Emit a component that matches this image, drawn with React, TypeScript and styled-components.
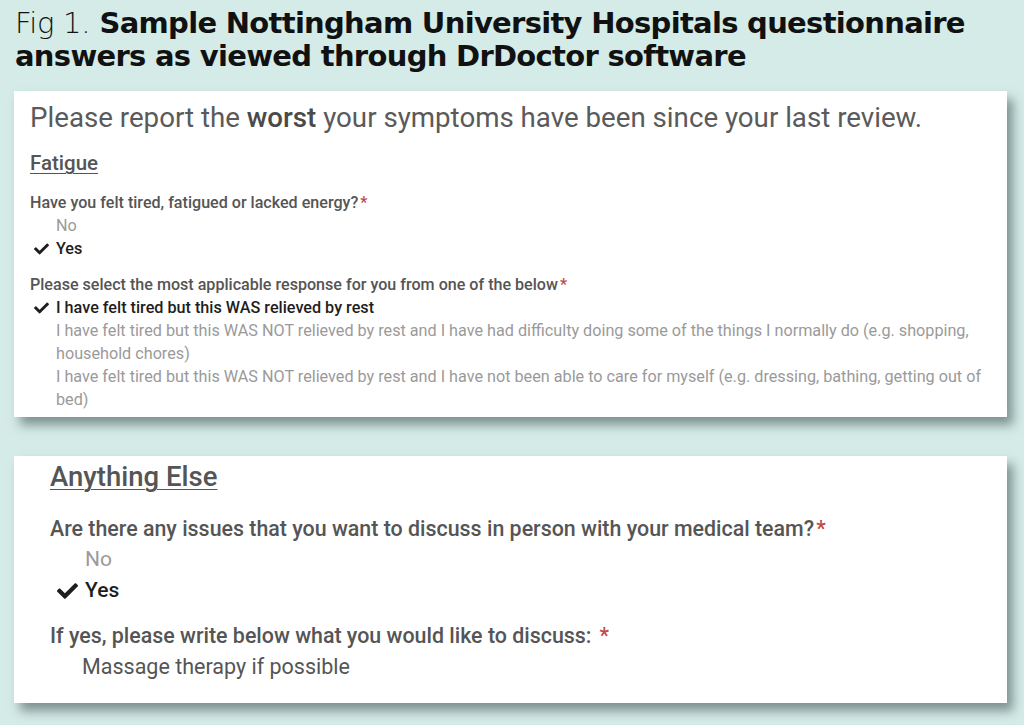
import React from 'react';
import styled, { createGlobalStyle } from 'styled-components';
import { FaCheck } from 'react-icons/fa';

const GlobalStyle = createGlobalStyle`
  html, body {
    margin: 0;
    padding: 0;
    background: #d4ebe7;
  }
  body {
    width: 1024px;
    height: 725px;
    overflow: hidden;
  }
`;

const Page = styled.div`
  width: 1024px;
  height: 725px;
  box-sizing: border-box;
  padding: 7px 17px 0 14px;
  display: flex;
  flex-direction: column;
  font-family: Roboto, 'Liberation Sans', sans-serif;
`;

const Caption = styled.h1`
  margin: 0 0 0 1px;
  font-family: 'DejaVu Sans', 'Noto Sans', sans-serif;
  font-size: 29px;
  line-height: 33px;
  font-weight: 700;
  letter-spacing: -0.7px;
  color: #111;
`;

const CaptionLead = styled.span`
  font-weight: 300;
  letter-spacing: -0.3px;
`;

const Card = styled.section<{ $pad: string; $top: number; $height: number }>`
  margin-top: ${({ $top }) => $top}px;
  height: ${({ $height }) => $height}px;
  box-sizing: border-box;
  background: #fff;
  padding: ${({ $pad }) => $pad};
  box-shadow: 6px 8px 10px rgba(80, 100, 100, 0.65);
  display: flex;
  flex-direction: column;
  color: #555;
`;

const Intro = styled.h2`
  margin: 0;
  font-size: 27.7px;
  line-height: 36px;
  font-weight: 400;
  color: #5a5a5a;

  b {
    font-weight: 500;
    color: #4a4a4a;
  }
`;

const Section = styled.h3<{ $size: number; $line: number; $gap: number }>`
  margin: ${({ $gap }) => $gap}px 0 0;
  font-size: ${({ $size }) => $size}px;
  line-height: ${({ $line }) => $line}px;
  font-weight: 500;
  color: #555;
  text-decoration: underline;
  text-underline-offset: 3px;
  text-decoration-thickness: 1px;
`;

const Question = styled.div<{ $size: number; $line: number; $gap: number }>`
  margin-top: ${({ $gap }) => $gap}px;
  font-size: ${({ $size }) => $size}px;
  line-height: ${({ $line }) => $line}px;
  font-weight: 500;
  color: #555;
`;

const Star = styled.span<{ $space?: boolean }>`
  color: #c0474a;
  margin-left: ${({ $space }) => ($space ? '8px' : '2px')};
`;

const Answers = styled.div<{ $size: number; $indent: number; $line: number }>`
  display: flex;
  flex-direction: column;
  font-size: ${({ $size }) => $size}px;
  line-height: ${({ $line }) => $line}px;
  padding-left: ${({ $indent }) => $indent}px;
`;

const Answer = styled.div<{ $chosen?: boolean; $checkW: number }>`
  position: relative;
  color: ${({ $chosen }) => ($chosen ? '#1e1e1e' : '#9a9a9a')};
  font-weight: ${({ $chosen }) => ($chosen ? 500 : 400)};

  svg {
    position: absolute;
    left: -${({ $checkW }) => $checkW}px;
    top: 50%;
    transform: translateY(-50%);
  }
`;

const FreeText = styled.div`
  padding-left: 32px;
  font-size: 21.5px;
  line-height: 31px;
  color: #555;
`;

export default function App() {
  return (
    <>
      <GlobalStyle />
      <Page>
        <Caption>
          <CaptionLead>Fig 1.</CaptionLead> Sample Nottingham University Hospitals questionnaire
          <br />
          answers as viewed through DrDoctor software
        </Caption>

        <Card $top={18} $height={326} $pad="9px 16px 0 16px">
          <Intro>
            Please report the <b>worst</b> your symptoms have been since your last review.
          </Intro>
          <Section $size={20.5} $line={28} $gap={13}>Fatigue</Section>
          <Question $size={16.1} $line={23} $gap={14}>
            Have you felt tired, fatigued or lacked energy?<Star>*</Star>
          </Question>
          <Answers $size={16.2} $indent={26} $line={23}>
            <Answer $checkW={22}>No</Answer>
            <Answer $chosen $checkW={22}>
              <FaCheck size={15} />
              Yes
            </Answer>
          </Answers>
          <Question $size={16.1} $line={23} $gap={13}>
            Please select the most applicable response for you from one of the below<Star>*</Star>
          </Question>
          <Answers $size={16.2} $indent={26} $line={23}>
            <Answer $chosen $checkW={22}>
              <FaCheck size={15} />
              I have felt tired but this WAS relieved by rest
            </Answer>
            <Answer $checkW={22}>
              I have felt tired but this WAS NOT relieved by rest and I have had difficulty doing some of
              the things I normally do (e.g. shopping, household chores)
            </Answer>
            <Answer $checkW={22}>
              I have felt tired but this WAS NOT relieved by rest and I have not been able to care for
              myself (e.g. dressing, bathing, getting out of bed)
            </Answer>
          </Answers>
        </Card>

        <Card $top={39} $height={247} $pad="3px 16px 0 36px">
          <Section $size={27.5} $line={36} $gap={0}>Anything Else</Section>
          <Question $size={21.4} $line={31} $gap={18}>
            Are there any issues that you want to discuss in person with your medical team?<Star>*</Star>
          </Question>
          <Answers $size={21} $indent={35} $line={31}>
            <Answer $checkW={28}>No</Answer>
            <Answer $chosen $checkW={28}>
              <FaCheck size={21} />
              Yes
            </Answer>
          </Answers>
          <Question $size={21.4} $line={31} $gap={14}>
            If yes, please write below what you would like to discuss:<Star $space>*</Star>
          </Question>
          <FreeText>Massage therapy if possible</FreeText>
        </Card>
      </Page>
    </>
  );
}
